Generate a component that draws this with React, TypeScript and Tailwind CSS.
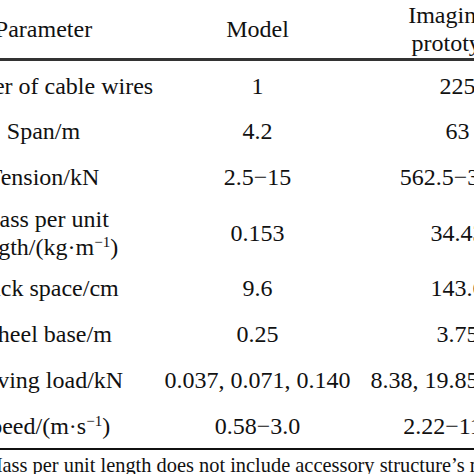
const rows: { label: React.ReactNode; model: string; proto: string; h: string }[] = [
  { label: 'Number of cable wires', model: '1', proto: '225', h: 'h-[47px] pt-[2px]' },
  { label: 'Span/m', model: '4.2', proto: '63', h: 'h-[46px]' },
  { label: 'Tension/kN', model: '2.5−15', proto: '562.5−3375', h: 'h-[46px]' },
  {
    label: (
      <>
        Mass per unit
        <br />
        length/(kg·m<sup className="text-[15px]">−1</sup>)
      </>
    ),
    model: '0.153',
    proto: '34.43',
    h: 'h-[65px]',
  },
  { label: 'Track space/cm', model: '9.6', proto: '143.6', h: 'h-[46px]' },
  { label: 'Wheel base/m', model: '0.25', proto: '3.75', h: 'h-[46px]' },
  { label: 'Moving load/kN', model: '0.037, 0.071, 0.140', proto: '8.38, 19.85, 39.14', h: 'h-[46px]' },
  {
    label: (
      <>
        Speed/(m·s<sup className="text-[15px]">−1</sup>)
      </>
    ),
    model: '0.58−3.0',
    proto: '2.22−11.62',
    h: 'h-[45px]',
  },
];

export default function App() {
  return (
    <div className="w-[474px] h-[474px] overflow-hidden bg-white text-[#111] font-['Liberation_Serif',serif]">
      <div className="ml-[-72px] w-[631px] text-[24px] leading-[28px]">
        <div className="grid grid-cols-[231px_197px_203px] h-[58px]">
          <div className="flex items-center justify-center whitespace-nowrap">Parameter</div>
          <div className="flex items-center justify-center whitespace-nowrap">Model</div>
          <div className="flex flex-col items-center justify-center text-center whitespace-nowrap">
            <span>Imaginary</span>
            <span>prototype</span>
          </div>
        </div>
        <div className="w-full h-[3px] bg-[#333333]" />
        {rows.map((r, i) => (
          <div key={i} className={`grid grid-cols-[231px_197px_203px] ${r.h}`}>
            <div className="flex items-center justify-center text-center whitespace-nowrap">
              <span>{r.label}</span>
            </div>
            <div className="flex items-center justify-center whitespace-nowrap">{r.model}</div>
            <div className="flex items-center justify-center whitespace-nowrap">{r.proto}</div>
          </div>
        ))}
        <div className="w-full h-[2px] bg-[#111]" />
        <p className="pl-[6px] pt-[3px] text-[20.4px] leading-[24px] whitespace-nowrap">
          Note: Mass per unit length does not include accessory structure’s mass.
        </p>
      </div>
    </div>
  );
}
